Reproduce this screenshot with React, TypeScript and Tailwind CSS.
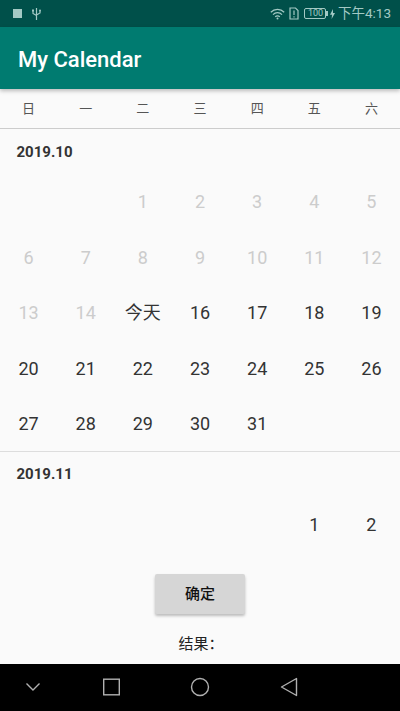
const FONT = "font-['Roboto','Noto_Sans_CJK_SC',sans-serif]";

const WEEK = ['日', '一', '二', '三', '四', '五', '六'];

type Cell = { label: string; off?: boolean } | null;

const days = (from: number, to: number, off = false): Cell[] => {
  const out: Cell[] = [];
  for (let d = from; d <= to; d++) out.push({ label: String(d), off });
  return out;
};

const OCT: Cell[] = [
  null,
  null,
  ...days(1, 14, true),
  { label: '今天' },
  ...days(16, 31),
];

const NOV: Cell[] = [null, null, null, null, null, ...days(1, 2)];

function MonthGrid({ cells }: { cells: Cell[] }) {
  return (
    <div className="grid grid-cols-7 auto-rows-[55.5px]">
      {cells.map((c, i) => (
        <div
          key={i}
          className={`flex items-center justify-center text-[18px] ${c?.off ? 'text-[#cccccc]' : 'text-[#333333]'}`}
        >
          {c?.label}
        </div>
      ))}
    </div>
  );
}

function StatusBar() {
  return (
    <div className="h-[27px] shrink-0 bg-[#00504a] flex items-center justify-between pl-[13px] pr-[9px] text-[#a3c9c4]">
      <div className="flex items-center gap-[10px]">
        <div className="w-[9px] h-[9px] bg-[#a3c9c4]" />
        <svg width="9" height="14" viewBox="0 0 9 14" fill="none" stroke="currentColor" strokeWidth="1.2">
          <path d="M4.5 1v12M1 4v2.5l3.5 2M8 4v2l-3.5 2" />
          <rect x="0" y="2.5" width="2" height="2" fill="currentColor" stroke="none" />
          <circle cx="8" cy="3.5" r="1" fill="currentColor" stroke="none" />
        </svg>
      </div>
      <div className="flex items-center">
        <svg width="15" height="12" viewBox="0 0 15 12" fill="none" stroke="currentColor" strokeWidth="1.2">
          <path d="M.8 4.2a9.5 9.5 0 0 1 13.4 0M3 6.6a6.3 6.3 0 0 1 9 0M5.2 8.8a3.2 3.2 0 0 1 4.6 0" />
          <circle cx="7.5" cy="10.6" r="1" fill="currentColor" stroke="none" />
        </svg>
        <svg className="ml-[4px]" width="10" height="13" viewBox="0 0 10 13" fill="none" stroke="currentColor" strokeWidth="1.2">
          <path d="M1 1h5.5L9 3.5V12H1z" />
          <path d="M5 3.5v4.5M5 9.300v1.200" />
        </svg>
        <div className="ml-[5px] h-[11px] w-[22px] border border-current rounded-[2px] flex items-center justify-center text-[9px] leading-none">
          100
        </div>
        <div className="w-[1.5px] h-[5px] bg-current" />
        <svg className="ml-[2px]" width="5" height="10" viewBox="0 0 5 10" fill="currentColor">
          <path d="M3 0 0 5.800h2L1.600 10 5 4H3z" />
        </svg>
        <span className="ml-[3px] text-[13.5px] leading-none">下午4:13</span>
      </div>
    </div>
  );
}

function NavBar() {
  return (
    <div className="h-[47px] shrink-0 bg-black flex items-center justify-center">
      <svg width="400" height="47" viewBox="0 0 400 47" fill="none" stroke="#b0b0b0" strokeWidth="1.4">
        <path d="M26.500 19.500 33 26l6.500-6.500" />
        <rect x="103.700" y="15.200" width="15.600" height="15.600" />
        <circle cx="200" cy="23" r="8.500" />
        <path d="M296.500 14.500v17L281.500 23z" strokeLinejoin="round" />
      </svg>
    </div>
  );
}

export default function App() {
  return (
    <div className={`w-[400px] h-[711px] flex flex-col overflow-hidden bg-[#fafafa] ${FONT}`}>
      <StatusBar />
      <div className="h-[62px] shrink-0 bg-[#007b70] flex items-center pl-[18px] pt-[3px] text-white text-[22px] font-medium shadow-[0_2px_4px_rgba(0,0,0,0.25)] relative z-10">
        My Calendar
      </div>
      <div className="h-[40px] shrink-0 grid grid-cols-7 border-b border-[#cccccc] text-[13px] text-[#555555]">
        {WEEK.map((w) => (
          <div key={w} className="flex items-center justify-center">{w}</div>
        ))}
      </div>
      <div className="flex-1 min-h-0 overflow-hidden flex flex-col">
        <div className="h-[45px] shrink-0 flex items-center pl-[16.500px] pt-[1px] text-[15px] font-bold text-[#333333]">2019.10</div>
        <MonthGrid cells={OCT} />
        <div className="h-px bg-[#dddddd] -mt-px" />
        <div className="h-[45px] shrink-0 flex items-center pl-[16.500px] text-[15px] font-bold text-[#333333]">2019.11</div>
        <MonthGrid cells={NOV} />
        <div className="mt-[22px] flex justify-center">
          <button className="w-[90px] h-[40px] rounded-[2px] bg-[#d6d6d6] text-[15px] font-medium text-[#111111] shadow-[0_2px_3px_rgba(0,0,0,0.25)]">确定</button>
        </div>
        <div className="mt-[19px] text-center text-[15px] text-[#222222] pl-[2px]">结果：</div>
      </div>
      <NavBar />
    </div>
  );
}
